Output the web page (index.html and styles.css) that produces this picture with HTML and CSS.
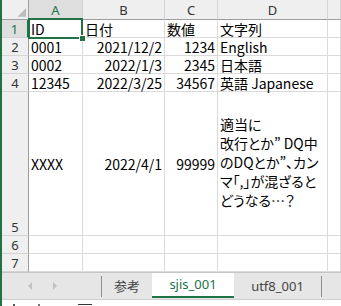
FILE: index.html
```html
<!DOCTYPE html>
<html lang="ja">
<head>
    <meta charset="UTF-8">
    <title>sjis_001</title>
    <link rel="stylesheet" href="styles.css">
</head>
<body>

    <div class="app">

        <!-- Sheet grid -->
        <div class="sheet">
            <div class="corner">
                <svg width="27" height="20" viewBox="0 0 27 20"><polygon points="25,8 25,17 16,17" fill="#bcbcbc"/></svg>
            </div>
            <div class="colhdr sel">A</div>
            <div class="colhdr">B</div>
            <div class="colhdr">C</div>
            <div class="colhdr">D</div>
            <div class="colhdr last"></div>

            <div class="rowhdr sel">1</div>
            <div class="cell">ID</div>
            <div class="cell">日付</div>
            <div class="cell">数値</div>
            <div class="cell">文字列</div>
            <div class="cell"></div>

            <div class="rowhdr">2</div>
            <div class="cell">0001</div>
            <div class="cell num">2021/12/2</div>
            <div class="cell num">1234</div>
            <div class="cell">English</div>
            <div class="cell"></div>

            <div class="rowhdr">3</div>
            <div class="cell">0002</div>
            <div class="cell num">2022/1/3</div>
            <div class="cell num">2345</div>
            <div class="cell">日本語</div>
            <div class="cell"></div>

            <div class="rowhdr">4</div>
            <div class="cell">12345</div>
            <div class="cell num">2022/3/25</div>
            <div class="cell num">34567</div>
            <div class="cell">英語 Japanese</div>
            <div class="cell"></div>

            <div class="rowhdr bottom">5</div>
            <div class="cell">XXXX</div>
            <div class="cell num">2022/4/1</div>
            <div class="cell num">99999</div>
            <div class="cell wrap">適当に<br>改行とか” DQ中<br>のDQとか”、カン<br>マ「,」が混ざると<br>どうなる…？</div>
            <div class="cell"></div>

            <div class="rowhdr bottom">6</div>
            <div class="cell"></div>
            <div class="cell"></div>
            <div class="cell"></div>
            <div class="cell"></div>
            <div class="cell"></div>

            <div class="rowhdr bottom">7</div>
            <div class="cell"></div>
            <div class="cell"></div>
            <div class="cell"></div>
            <div class="cell"></div>
            <div class="cell"></div>

            <!-- active cell box -->
            <div class="selection"><span class="handle"></span></div>
        </div>

        <!-- Sheet tabs -->
        <div class="tabbar">
            <div class="nav">
                <span class="arrow left"></span>
                <span class="arrow right"></span>
            </div>
            <div class="tab first">参考</div>
            <div class="tab active">sjis_001</div>
            <div class="tab last">utf8_001</div>
        </div>

        <!-- Status bar (cut off) -->
        <div class="status">
            <svg width="120" height="6" viewBox="0 0 120 6">
                <rect x="11" y="4" width="2" height="2" fill="#555"/>
                <rect x="36" y="4" width="2" height="2" fill="#777"/>
                <rect x="76" y="4" width="14" height="1" fill="#333"/>
            </svg>
        </div>

    </div>

</body>
</html>
```

FILE: styles.css
```css
body {
    margin: 0;
    padding: 0;
    background-color: #ffffff;
    overflow: hidden;
}

.app {
    width: 339px;
    height: 306px;
    border-left: 2px solid #217346;
    display: flex;
    flex-direction: column;
    overflow: hidden;
}

/* Sheet grid */
.sheet {
    position: relative;
    display: grid;
    grid-template-columns: 27px 54px 82px 53px 110px 13px;
    grid-template-rows: 20px repeat(4, 18px) 144px 18px 18px;
    font-family: "Noto Sans CJK JP", "Noto Sans", sans-serif;
    font-size: 14px;
    font-feature-settings: "palt";
    color: #000;
}

.cell {
    box-sizing: border-box;
    border-right: 1px solid #dadada;
    border-bottom: 1px solid #dadada;
    padding: 0 2px 0 2px;
    display: flex;
    align-items: center;
    line-height: 16px;
    white-space: nowrap;
}

.cell.num {
    justify-content: flex-end;
}

.cell.wrap {
    display: block;
    align-self: stretch;
    line-height: 19px;
    padding-top: 23px;
}

.corner,
.colhdr,
.rowhdr {
    box-sizing: border-box;
    background-color: #efefef;
    font-family: "Noto Sans", "DejaVu Sans", sans-serif;
    font-size: 13px;
    line-height: 16px;
    color: #333;
    display: flex;
    align-items: center;
    justify-content: center;
}

.corner {
    border-right: 1px solid #9e9e9e;
    border-bottom: 1px solid #9e9e9e;
}

.colhdr {
    border-right: 1px solid #d4d4d4;
    border-bottom: 1px solid #9e9e9e;
    padding-top: 1px;
}

.colhdr.sel {
    background-color: #dedede;
    color: #217346;
    border-bottom: 2px solid #217346;
}

.rowhdr {
    border-right: 1px solid #9e9e9e;
    border-bottom: 1px solid #d4d4d4;
}

.rowhdr.sel {
    background-color: #dedede;
    color: #217346;
    border-right: 2px solid #217346;
}

.rowhdr.bottom {
    align-items: flex-end;
}

.selection {
    position: absolute;
    left: 26px;
    top: 18px;
    width: 55px;
    height: 21px;
    box-sizing: border-box;
    border: 2px solid #217346;
}

.handle {
    position: absolute;
    right: -5px;
    bottom: -5px;
    width: 5px;
    height: 5px;
    background-color: #217346;
    border: 1px solid #fff;
}

/* Sheet tabs */
.tabbar {
    height: 27px;
    box-sizing: border-box;
    border-top: 1px solid #c6c6c6;
    background-color: #e6e6e6;
    display: flex;
    align-items: stretch;
    font-family: "Noto Sans", "Noto Sans CJK JP", sans-serif;
    font-size: 13px;
    color: #444;
}

.nav {
    width: 99px;
    display: flex;
    align-items: center;
    gap: 21px;
    padding-left: 26px;
    box-sizing: border-box;
}

.arrow {
    width: 0;
    height: 0;
    border-top: 4px solid transparent;
    border-bottom: 4px solid transparent;
}

.arrow.left {
    border-right: 4px solid #c2c2c2;
}

.arrow.right {
    border-left: 4px solid #c2c2c2;
}

.tab {
    display: flex;
    align-items: center;
    justify-content: center;
    box-sizing: border-box;
    padding-bottom: 2px;
}

.tab.first {
    width: 51px;
    border-left: 1px solid #8f8f8f;
    margin: 3px 0 2px 0;
    font-family: "Noto Sans CJK JP", sans-serif;
    color: #444;
}

.tab.active {
    width: 82px;
    background-color: #ffffff;
    color: #217346;
    border-bottom: 2px solid #217346;
    margin-bottom: 1px;
}

.tab.last {
    width: 88px;
    border-right: 1px solid #8f8f8f;
    margin: 3px 0 2px 0;
}

/* Status bar */
.status {
    flex: 1;
    border-top: 1px solid #d0d0d0;
    background-color: #ffffff;
    display: flex;
    align-items: flex-start;
}
```
